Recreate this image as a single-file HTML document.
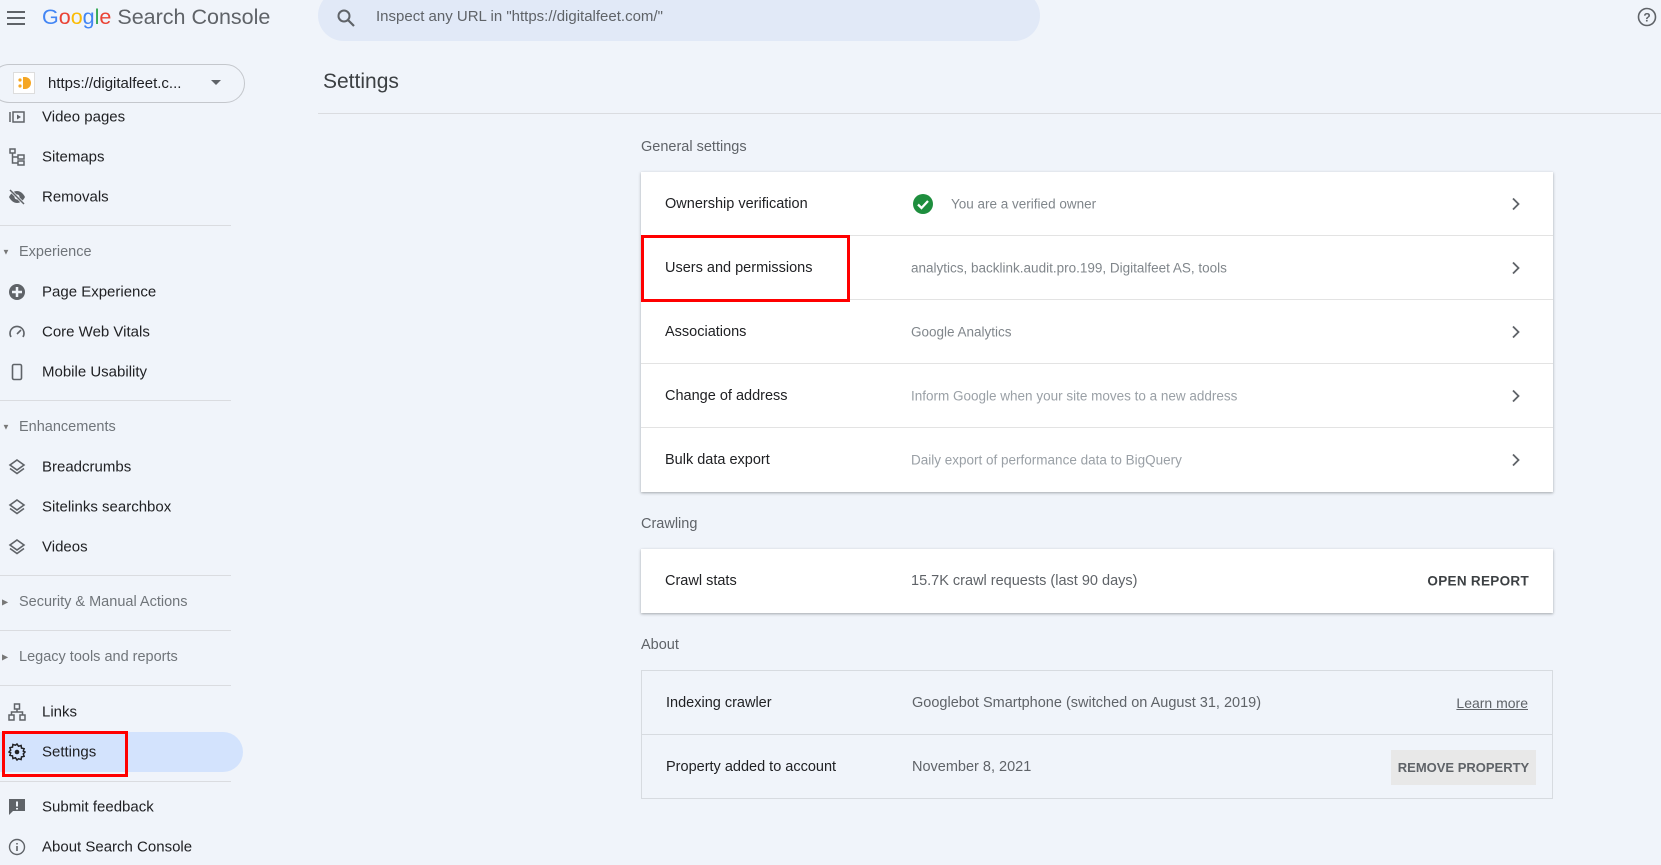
<!DOCTYPE html>
<html><head><meta charset="utf-8"><style>
*{box-sizing:border-box;margin:0;padding:0}
body{width:1661px;height:865px;overflow:hidden;background:#f0f4fa;font-family:"Liberation Sans",sans-serif;color:#202124;position:relative}
.a{position:absolute}
.nav{position:absolute;left:42px;font-size:15px;color:#202124;transform:translateY(-50%)}
.ic{position:absolute;left:8px;width:18px;height:18px;transform:translateY(-50%)}
.sec{position:absolute;left:19px;font-size:14.5px;color:#70757a;transform:translateY(-50%)}
.tri{position:absolute;left:2px;transform:translateY(-50%);font-size:8px;color:#777}
.div{position:absolute;left:0;width:231px;height:1px;background:#dadce0}
.card{position:absolute;left:641px;width:912px;background:#fff;box-shadow:0 1px 3px rgba(60,64,67,.3),0 1px 2px rgba(60,64,67,.15)}
.row{position:relative;height:64px;border-bottom:1px solid #e3e3e3}
.row:last-child{border-bottom:none}
.lb{position:absolute;left:24px;top:50%;transform:translateY(-50%);font-size:14.5px;color:#202124}
.vl{position:absolute;left:270px;top:50%;transform:translateY(-50%);font-size:13.5px;color:#80868b}
.ch{position:absolute;left:870px;top:50%;transform:translateY(-50%)}
.h{position:absolute;left:641px;font-size:14.5px;color:#5f6368;transform:translateY(-50%)}
</style></head><body>
<svg class="a" style="left:6px;top:10px" width="20" height="16"><path d="M1 2h18M1 8h18M1 14h18" stroke="#5f6368" stroke-width="2"/></svg>
<div class="a" style="left:42px;top:5px;font-size:21.5px;white-space:nowrap"><span style="color:#4285f4">G</span><span style="color:#ea4335">o</span><span style="color:#fbbc05">o</span><span style="color:#4285f4">g</span><span style="color:#34a853">l</span><span style="color:#ea4335">e</span> <span style="color:#5f6368">Search Console</span></div>
<div class="a" style="left:318px;top:-10px;width:722px;height:51px;border-radius:26px;background:#e1e9f7"></div>
<svg class="a" style="left:337px;top:9px" width="18" height="18"><circle cx="7" cy="7" r="5.5" fill="none" stroke="#5f6368" stroke-width="2"/><path d="M11 11l6 6" stroke="#5f6368" stroke-width="2.2"/></svg>
<div class="a" style="left:376px;top:8px;font-size:15px;color:#5f6368">Inspect any URL in "https://digitalfeet.com/"</div>
<svg class="a" style="left:1637px;top:7px" width="20" height="20"><circle cx="10" cy="10" r="8.5" fill="none" stroke="#5f6368" stroke-width="1.6"/><text x="10" y="14.5" font-size="12" text-anchor="middle" fill="#5f6368" font-family="Liberation Sans" font-weight="bold">?</text></svg>
<div class="a" style="left:-10px;top:64px;width:255px;height:39px;border:1px solid #c4c7cc;border-radius:20px"></div>
<div class="a" style="left:13px;top:72px;width:22px;height:22px;background:#fff;border:1px solid #ddd"></div>
<svg class="a" style="left:15px;top:74px" width="18" height="18"><path d="M8 3h2a6 6 0 0 1 0 12H8z" fill="#f5a623"/><circle cx="5" cy="6" r="1.6" fill="#f5a623"/><circle cx="5" cy="12" r="1.6" fill="#f5a623"/></svg>
<div class="a" style="left:48px;top:75px;font-size:15px;color:#202124">https://digitalfeet.c...</div>
<svg class="a" style="left:211px;top:80px" width="10" height="6"><path d="M0 0h10L5 5z" fill="#5f6368"/></svg>
<svg class="ic" style="top:117px" viewBox="0 0 18 18"><path d="M2 4v10" stroke="#5f6368" stroke-width="1.5"/><rect x="5" y="4" width="11" height="10" fill="none" stroke="#5f6368" stroke-width="1.5"/><path d="M9 6.5v5l4-2.5z" fill="#5f6368"/></svg><div class="nav" style="top:117px">Video pages</div>
<svg class="ic" style="top:157px" viewBox="0 0 18 18" fill="none" stroke="#5f6368" stroke-width="1.5"><rect x="2" y="1" width="5" height="4"/><path d="M4.5 5v10h5M4.5 9h5"/><rect x="10" y="7" width="6" height="4"/><rect x="10" y="13" width="6" height="4"/></svg><div class="nav" style="top:157px">Sitemaps</div>
<svg class="ic" style="top:197px" viewBox="0 0 18 18"><path d="M1 9c2-4 5-6 8-6s6 2 8 6c-2 4-5 6-8 6s-6-2-8-6z" fill="#5f6368"/><circle cx="9" cy="9" r="2.5" fill="#f0f4fa"/><path d="M2 2l14 14" stroke="#f0f4fa" stroke-width="3"/><path d="M2 2l14 14" stroke="#5f6368" stroke-width="1.5"/></svg><div class="nav" style="top:197px">Removals</div>
<div class="div" style="top:225px"></div>
<div class="tri" style="top:252px">▼</div><div class="sec" style="top:252px">Experience</div>
<svg class="ic" style="top:292px" viewBox="0 0 18 18"><circle cx="9" cy="9" r="8" fill="#5f6368"/><path d="M9 4v10M4 9h10" stroke="#f0f4fa" stroke-width="2.5"/></svg><div class="nav" style="top:292px">Page Experience</div>
<svg class="ic" style="top:332px" viewBox="0 0 18 18" fill="none" stroke="#5f6368" stroke-width="1.6"><path d="M3 14a7 7 0 1 1 12 0"/><path d="M9 11l4-4"/></svg><div class="nav" style="top:332px">Core Web Vitals</div>
<svg class="ic" style="top:372px" viewBox="0 0 18 18" fill="none" stroke="#5f6368" stroke-width="1.6"><rect x="4.5" y="1.5" width="9" height="15" rx="1.5"/></svg><div class="nav" style="top:372px">Mobile Usability</div>
<div class="div" style="top:400px"></div>
<div class="tri" style="top:427px">▼</div><div class="sec" style="top:427px">Enhancements</div>
<svg class="ic" style="top:467px" viewBox="0 0 18 18" fill="none" stroke="#5f6368" stroke-width="1.6"><path d="M9 2l7 5-7 5-7-5z"/><path d="M2 10.5l7 5 7-5"/></svg><div class="nav" style="top:467px">Breadcrumbs</div>
<svg class="ic" style="top:507px" viewBox="0 0 18 18" fill="none" stroke="#5f6368" stroke-width="1.6"><path d="M9 2l7 5-7 5-7-5z"/><path d="M2 10.5l7 5 7-5"/></svg><div class="nav" style="top:507px">Sitelinks searchbox</div>
<svg class="ic" style="top:547px" viewBox="0 0 18 18" fill="none" stroke="#5f6368" stroke-width="1.6"><path d="M9 2l7 5-7 5-7-5z"/><path d="M2 10.5l7 5 7-5"/></svg><div class="nav" style="top:547px">Videos</div>
<div class="div" style="top:575px"></div>
<div class="tri" style="top:602px">▶</div><div class="sec" style="top:602px">Security &amp; Manual Actions</div>
<div class="div" style="top:630px"></div>
<div class="tri" style="top:657px">▶</div><div class="sec" style="top:657px">Legacy tools and reports</div>
<div class="div" style="top:685px"></div>
<svg class="ic" style="top:712px" viewBox="0 0 18 18" fill="none" stroke="#5f6368" stroke-width="1.5"><rect x="6.5" y="1" width="5" height="5"/><rect x="1" y="12" width="5" height="5"/><rect x="12" y="12" width="5" height="5"/><path d="M9 6v3M3.5 12V9h11v3"/></svg><div class="nav" style="top:712px">Links</div>
<div class="a" style="left:0;top:732px;width:243px;height:40px;background:#d3e3fd;border-radius:0 20px 20px 0"></div>
<svg class="ic" style="top:752px" viewBox="0 0 18 18"><path d="M9 1l1.5 2.2 2.6-.7.4 2.6 2.6.6-.8 2.5L17 9l-1.7 1.8.8 2.5-2.6.6-.4 2.6-2.6-.7L9 17l-1.5-2.2-2.6.7-.4-2.6-2.6-.6.8-2.5L1 9l1.7-1.8-.8-2.5 2.6-.6.4-2.6 2.6.7z" fill="none" stroke="#202124" stroke-width="1.5"/><circle cx="9" cy="9" r="2.3" fill="#202124"/></svg><div class="nav" style="top:752px">Settings</div>
<div class="a" style="left:2px;top:731px;width:126px;height:46px;border:3.5px solid #f00"></div>
<div class="div" style="top:781px"></div>
<svg class="ic" style="top:807px" viewBox="0 0 18 18"><path d="M1 1h16v12H5l-4 4z" fill="#5f6368"/><path d="M9 3.5v5M9 10v1.5" stroke="#f0f4fa" stroke-width="2"/></svg><div class="nav" style="top:807px">Submit feedback</div>
<svg class="ic" style="top:847px" viewBox="0 0 18 18"><circle cx="9" cy="9" r="7.5" fill="none" stroke="#5f6368" stroke-width="1.4"/><path d="M9 8v5M9 5v1.5" stroke="#5f6368" stroke-width="1.6"/></svg><div class="nav" style="top:847px">About Search Console</div>
<div class="a" style="left:323px;top:70px;font-size:21px;color:#3c4043">Settings</div>
<div class="a" style="left:318px;top:113px;width:1343px;height:1px;background:#dadce0"></div>
<div class="h" style="top:147px">General settings</div>
<div class="card" style="top:172px">
 <div class="row"><div class="lb">Ownership verification</div>
 <svg class="a" style="left:271px;top:21px" width="22" height="22"><circle cx="11" cy="11" r="10" fill="#1e8e3e"/><path d="M6 11.5l3.5 3.5 6.5-7" fill="none" stroke="#fff" stroke-width="2.3"/></svg>
 <div class="vl" style="left:310px">You are a verified owner</div><svg class="ch" width="10" height="14"><path d="M2 1.5l5.5 5.5-5.5 5.5" fill="none" stroke="#5f6368" stroke-width="1.8"/></svg></div>
 <div class="row"><div class="lb">Users and permissions</div><div class="vl">analytics, backlink.audit.pro.199, Digitalfeet AS, tools</div><svg class="ch" width="10" height="14"><path d="M2 1.5l5.5 5.5-5.5 5.5" fill="none" stroke="#5f6368" stroke-width="1.8"/></svg></div>
 <div class="row"><div class="lb">Associations</div><div class="vl">Google Analytics</div><svg class="ch" width="10" height="14"><path d="M2 1.5l5.5 5.5-5.5 5.5" fill="none" stroke="#5f6368" stroke-width="1.8"/></svg></div>
 <div class="row"><div class="lb">Change of address</div><div class="vl" style="color:#9aa0a6">Inform Google when your site moves to a new address</div><svg class="ch" width="10" height="14"><path d="M2 1.5l5.5 5.5-5.5 5.5" fill="none" stroke="#5f6368" stroke-width="1.8"/></svg></div>
 <div class="row"><div class="lb">Bulk data export</div><div class="vl" style="color:#9aa0a6">Daily export of performance data to BigQuery</div><svg class="ch" width="10" height="14"><path d="M2 1.5l5.5 5.5-5.5 5.5" fill="none" stroke="#5f6368" stroke-width="1.8"/></svg></div>
</div>
<div class="a" style="left:641px;top:235px;width:209px;height:67px;border:3.5px solid #f00"></div>
<div class="h" style="top:524px">Crawling</div>
<div class="card" style="top:549px"><div class="row"><div class="lb">Crawl stats</div><div class="vl" style="font-size:14.5px;color:#5f6368">15.7K crawl requests (last 90 days)</div><div class="a" style="right:24px;top:50%;transform:translateY(-50%);font-size:13.5px;font-weight:bold;color:#3c4043;letter-spacing:.3px">OPEN REPORT</div></div></div>
<div class="h" style="top:645px">About</div>
<div class="a" style="left:641px;top:670px;width:912px;height:129px;border:1px solid #d7dbe0">
 <div class="row" style="border-bottom:1px solid #d7dbe0;height:64px"><div class="lb">Indexing crawler</div><div class="vl" style="font-size:14.5px;color:#5f6368">Googlebot Smartphone (switched on August 31, 2019)</div><div class="a" style="right:24px;top:50%;transform:translateY(-50%);font-size:14px;color:#5f6368;text-decoration:underline">Learn more</div></div>
 <div class="row" style="height:63px"><div class="lb">Property added to account</div><div class="vl" style="font-size:14.5px;color:#5f6368">November 8, 2021</div><div class="a" style="left:749px;top:15px;width:145px;height:35px;background:#e8e8e8;font-size:13px;color:#5f6368;font-weight:bold;text-align:center;line-height:35px">REMOVE PROPERTY</div></div>
</div>
</body></html>
